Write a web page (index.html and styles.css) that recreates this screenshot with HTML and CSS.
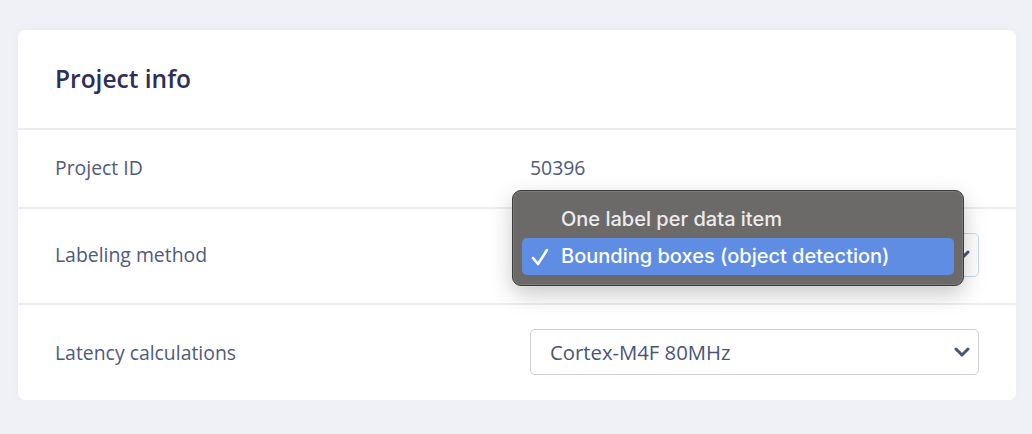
FILE: index.html
```html
<!DOCTYPE html>
<html>
<head>
<meta charset="utf-8">
<link rel="stylesheet" href="styles.css">
</head>
<body>
<div class="page">
  <div class="card">
    <div class="card-header">Project info</div>
    <div class="row row-id">
      <div class="label">Project ID</div>
      <div class="value">50396</div>
    </div>
    <div class="row row-method">
      <div class="label">Labeling method</div>
      <div class="value">
        <div class="select select-focus">
          <span class="select-text"></span>
          <svg class="chev" viewBox="0 0 16 10" width="16" height="10"><path d="M2 2 L8 8 L14 2" fill="none" stroke="#4a5479" stroke-width="3" stroke-linecap="round" stroke-linejoin="round"/></svg>
        </div>
        <div class="menu">
          <div class="menu-item">One label per data item</div>
          <div class="menu-item active">
            <svg class="check" viewBox="0 0 20 20" width="20" height="20"><path d="M3 11 L8 17 L17 3" fill="none" stroke="#fff" stroke-width="2.6" stroke-linecap="round" stroke-linejoin="round"/></svg>
            Bounding boxes (object detection)
          </div>
        </div>
      </div>
    </div>
    <div class="row row-latency">
      <div class="label">Latency calculations</div>
      <div class="value">
        <div class="select">
          <span class="select-text">Cortex-M4F 80MHz</span>
          <svg class="chev" viewBox="0 0 16 10" width="16" height="10"><path d="M2 2 L8 8 L14 2" fill="none" stroke="#4a5479" stroke-width="3" stroke-linecap="round" stroke-linejoin="round"/></svg>
        </div>
      </div>
    </div>
  </div>
</div>
</body>
</html>
```

FILE: styles.css
```css
* { box-sizing: border-box; }
html, body {
  margin: 0;
  padding: 0;
  background: #f0f1f6;
  font-family: "Open Sans", "Noto Sans", sans-serif;
}
.page {
  padding: 30px 16px 0 18px;
}
.card {
  background: #fff;
  border-radius: 7px;
  width: 998px;
  height: 370px;
  box-shadow: 0 0 12px rgba(40, 45, 90, 0.03);
}
.card-header {
  height: 100px;
  padding: 0 37px 2px;
  display: flex;
  align-items: center;
  font-size: 24.5px;
  font-weight: 600;
  color: #2c2e5b;
  border-bottom: 2px solid #ececf1;
}
.row {
  display: grid;
  grid-template-columns: 475px 449px;
  align-items: center;
  padding: 0 37px;
  color: #4f5a7b;
  font-size: 19.4px;
}
.row-id {
  height: 79px;
  padding-bottom: 3px;
  border-bottom: 2px solid #ececf1;
}
.row-method {
  height: 96px;
  padding-bottom: 3px;
  border-bottom: 2px solid #ececf1;
}
.row-latency {
  height: 95px;
  padding-bottom: 1px;
}
.value {
  position: relative;
  color: #4f5a7b;
}
.select {
  height: 46px;
  border: 1.5px solid #cdd0d7;
  border-radius: 5px;
  display: flex;
  align-items: center;
  justify-content: space-between;
  padding: 0 8px 0 19px;
  font-size: 20.3px;
  color: #4a5479;
}
.select-focus {
  height: 44px;
  border-color: #c4d8ee;
}
.menu {
  position: absolute;
  left: -18px;
  top: -43px;
  width: 452px;
  height: 96px;
  background: #6b6a68;
  border: 1px solid #3c3c3c;
  border-radius: 9px;
  box-shadow: 0 8px 22px rgba(0, 0, 0, 0.22), inset 0 0 0 1px rgba(255,255,255,0.12);
  padding: 9px 9px;
  font-family: "Inter", "Noto Sans", sans-serif;
  font-size: 20px;
  font-weight: 500;
  color: #ececec;
}
.menu-item {
  height: 38px;
  display: flex;
  align-items: center;
  padding-left: 39px;
  position: relative;
}
.menu-item.active {
  background: #5e8de3;
  border-radius: 5px;
  color: #fff;
  height: 37px;
}
.check {
  position: absolute;
  left: 8px;
  top: 9px;
}
```
